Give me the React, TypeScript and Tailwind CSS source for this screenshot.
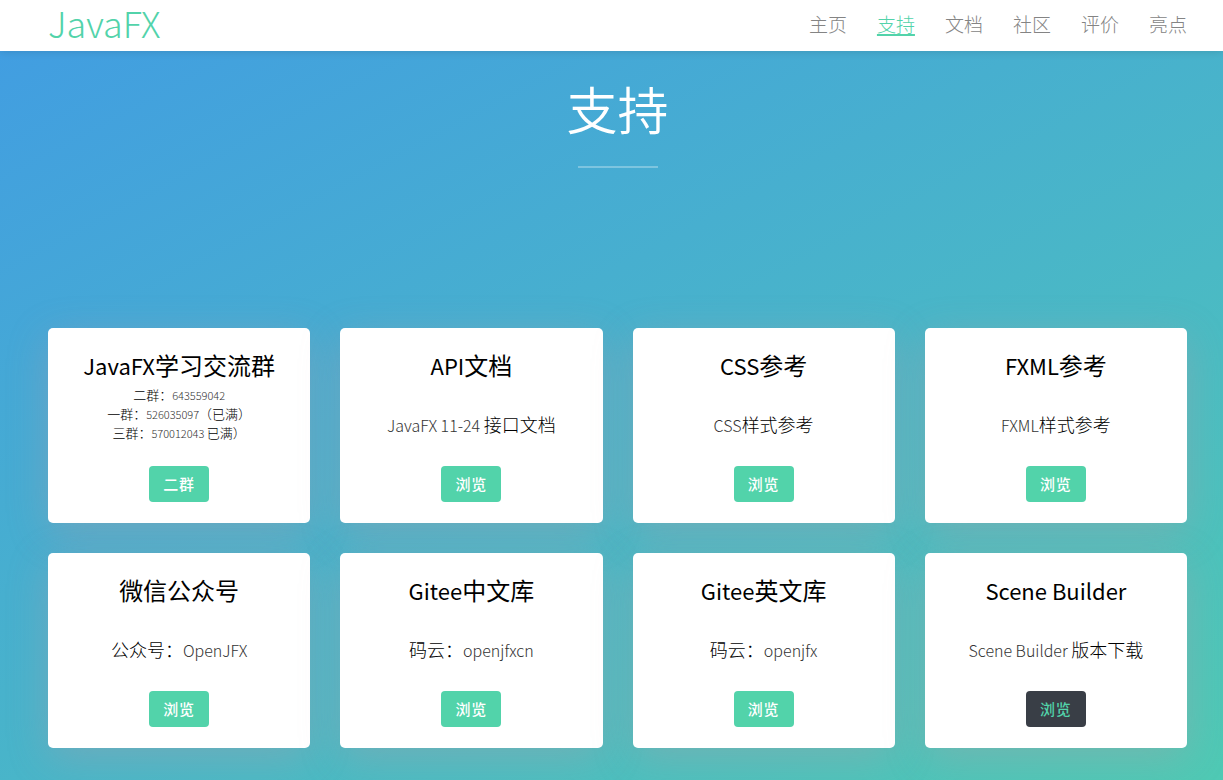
import React from 'react';

interface NavItem {
  label: string;
  active?: boolean;
}

interface SupportItem {
  title: string;
  lines: string[];
  action: string;
  dark?: boolean;
}

const NAV_ITEMS: NavItem[] = [
  { label: '主页' },
  { label: '支持', active: true },
  { label: '文档' },
  { label: '社区' },
  { label: '评价' },
  { label: '亮点' },
];

const SUPPORT_ITEMS: SupportItem[] = [
  {
    title: 'JavaFX学习交流群',
    lines: ['二群：643559042', '一群：526035097（已满）', '三群：570012043 已满）'],
    action: '二群',
  },
  { title: 'API文档', lines: ['JavaFX 11-24 接口文档'], action: '浏览' },
  { title: 'CSS参考', lines: ['CSS样式参考'], action: '浏览' },
  { title: 'FXML参考', lines: ['FXML样式参考'], action: '浏览' },
  { title: '微信公众号', lines: ['公众号：OpenJFX'], action: '浏览' },
  { title: 'Gitee中文库', lines: ['码云：openjfxcn'], action: '浏览' },
  { title: 'Gitee英文库', lines: ['码云：openjfx'], action: '浏览' },
  { title: 'Scene Builder', lines: ['Scene Builder 版本下载'], action: '浏览', dark: true },
];

/** Sets the Latin runs of a mixed text in a class of their own. */
function MixedText({ text, latinClass }: { text: string; latinClass: string }) {
  return (
    <>
      {text.split(/([\x20-\x7e]+)/).map((part, index) =>
        index % 2 === 1 ? (
          <span key={index} className={latinClass}>
            {part}
          </span>
        ) : (
          part
        )
      )}
    </>
  );
}

function Header() {
  return (
    <header className="relative flex h-[51px] items-center justify-between bg-white pl-12 pr-9 shadow-[0_0_9px_rgba(0,0,0,0.15)]">
      <a href="#" className="pb-2 text-4xl leading-10 font-light text-[#52d3aa]">
        JavaFX
      </a>
      <nav className="flex gap-[30px] pb-1 text-[19px] leading-6 font-light">
        {NAV_ITEMS.map((item) => (
          <a
            key={item.label}
            href="#"
            aria-current={item.active ? 'page' : undefined}
            className={
              item.active
                ? 'text-[#52d3aa] underline decoration-2 underline-offset-2'
                : 'text-[#848484]'
            }
          >
            {item.label}
          </a>
        ))}
      </nav>
    </header>
  );
}

function SupportCard({ title, lines, action, dark }: SupportItem) {
  const compact = lines.length > 1;

  return (
    <article className="flex flex-col items-center rounded-[5px] bg-white pt-[21px] pb-[21px] text-center shadow-[0_10px_40px_rgba(200,150,160,0.3)]">
      <h3 className="text-2xl leading-8 font-normal text-black">
        <MixedText text={title} latinClass="text-[22px] leading-none" />
      </h3>
      <div className={compact ? 'h-[85px] pt-1' : 'h-[85px] pt-[29px]'}>
        {lines.map((line) => (
          <p
            key={line}
            className={
              compact
                ? 'text-[13px] leading-[19px] font-light text-black'
                : 'text-lg leading-7 font-light text-black'
            }
          >
            <MixedText
              text={line}
              latinClass={
                compact
                  ? 'text-[11px] leading-none text-[#333]'
                  : 'text-base leading-none text-[#333]'
              }
            />
          </p>
        ))}
      </div>
      <button
        type="button"
        className={
          dark
            ? 'h-9 w-[60px] rounded bg-[#393e46] text-[15px] font-medium tracking-wider text-[#52d3aa]'
            : 'h-9 w-[60px] rounded bg-[#52d3aa] text-[15px] font-medium tracking-wider text-white'
        }
      >
        {action}
      </button>
    </article>
  );
}

export default function App() {
  return (
    <div className="flex min-h-screen flex-col bg-white font-['Noto_Sans_CJK_SC',sans-serif]">
      <Header />
      <main className="grow bg-[linear-gradient(152deg,#3f95ea_-20%,#52d3aa_122%)] pb-8 pl-12 pr-9">
        <div className="flex flex-col items-center pt-5 pb-40">
          <h1 className="text-[51px] leading-[75px] font-[350] text-white">支持</h1>
          <span className="mt-5 h-0.5 w-20 bg-white/30" />
        </div>
        <section className="grid grid-cols-4 gap-[30px]">
          {SUPPORT_ITEMS.map((item) => (
            <SupportCard key={item.title} {...item} />
          ))}
        </section>
      </main>
    </div>
  );
}
